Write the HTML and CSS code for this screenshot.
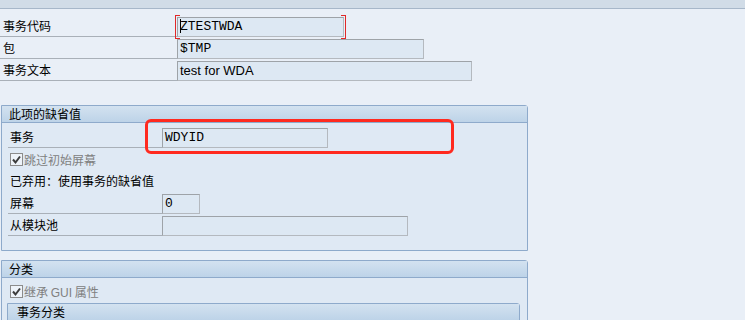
FILE: index.html
```html
<!DOCTYPE html>
<html lang="zh">
<head>
<meta charset="UTF-8">
<title>事务维护</title>
<link rel="stylesheet" href="styles.css">
</head>
<body>
<div class="toolbar"></div>
<div class="page">
    <div class="head-fields">
        <div class="row">
            <div class="label">事务代码</div>
            <div class="field focused w-167 mono"><span class="caret"></span>ZTESTWDA</div>
        </div>
        <div class="row">
            <div class="label">包</div>
            <div class="field w-247 mono">$TMP</div>
        </div>
        <div class="row">
            <div class="label">事务文本</div>
            <div class="field w-295 sans">test for WDA</div>
        </div>
    </div>

    <div class="group group-defaults">
        <div class="group-title">此项的缺省值</div>
        <div class="group-body">
            <div class="row">
                <div class="label">事务</div>
                <div class="field w-166 mono">WDYID</div>
            </div>
            <div class="check-row">
                <svg class="check" width="13" height="13" viewBox="0 0 13 13"><rect x="0.5" y="0.5" width="12" height="12" fill="#eef3f9" stroke="#8c8c8c"/><path d="M3 6.5 L5.5 9.5 L10 3.5" fill="none" stroke="#3c3c3c" stroke-width="2"/></svg>
                <span>跳过初始屏幕</span>
            </div>
            <div class="note">已弃用：使用事务的缺省值</div>
            <div class="row">
                <div class="label">屏幕</div>
                <div class="field w-38 mono">0</div>
            </div>
            <div class="row">
                <div class="label">从模块池</div>
                <div class="field w-246 mono"></div>
            </div>
        </div>
    </div>

    <div class="group group-class">
        <div class="group-title">分类</div>
        <div class="group-body">
            <div class="check-row">
                <svg class="check" width="13" height="13" viewBox="0 0 13 13"><rect x="0.5" y="0.5" width="12" height="12" fill="#eef3f9" stroke="#8c8c8c"/><path d="M3 6.5 L5.5 9.5 L10 3.5" fill="none" stroke="#3c3c3c" stroke-width="2"/></svg>
                <span>继承 <span class="latin">GUI</span> 属性</span>
            </div>
            <div class="group inner">
                <div class="group-title">事务分类</div>
            </div>
        </div>
    </div>

    <div class="highlight"></div>
</div>
</body>
</html>
```

FILE: styles.css
```css
body {
    margin: 0;
    background-color: #e9eff7;
    font-family: "Noto Sans CJK SC", "Liberation Sans", sans-serif;
    font-size: 12px;
    color: #000;
    overflow: hidden;
}
.toolbar {
    height: 8px;
    background-color: #d1dce7;
    border-bottom: 1px solid #a7b7c9;
}
.page {
    position: relative;
    padding-top: 6px;
}
.row {
    display: flex;
    align-items: flex-end;
    height: 22px;
}
.label {
    box-sizing: border-box;
    height: 22px;
    line-height: 21px;
    padding-left: 3px;
    border-bottom: 1px solid #a9b0b8;
    width: 177px;
    flex-shrink: 0;
}
.field {
    position: relative;
    box-sizing: border-box;
    height: 20px;
    line-height: 18px;
    padding-left: 2px;
    background-color: #dde8f3;
    border: 1px solid #b4b9bf;
    border-top-color: #9ea3a8;
    border-left-color: #9ea3a8;
    white-space: nowrap;
}
.mono {
    font-family: "Liberation Mono", monospace;
    font-size: 13px;
}
.sans {
    font-family: "Liberation Sans", sans-serif;
    font-size: 13px;
}
.w-167 { width: 167px; }
.w-247 { width: 247px; }
.w-295 { width: 295px; }
.w-166 { width: 166px; }
.w-38 { width: 38px; }
.w-246 { width: 246px; }

.caret {
    display: inline-block;
    width: 1px;
    height: 14px;
    margin-right: -1px;
    vertical-align: -3px;
    background-color: #000;
}
.focused::before,
.focused::after {
    content: '';
    position: absolute;
    top: -3px;
    bottom: -3px;
    width: 4px;
    border-top: 1px solid #e02828;
    border-bottom: 1px solid #e02828;
}
.focused::before {
    left: -3px;
    border-left: 1px solid #e02828;
}
.focused::after {
    right: -3px;
    border-right: 1px solid #e02828;
}

.group {
    box-sizing: border-box;
    width: 527px;
    margin-left: 1px;
    background-color: #dfe9f4;
    border: 1px solid #8eaacb;
    border-top-right-radius: 3px;
}
.group-defaults {
    margin-top: 24px;
    height: 146px;
}
.group-class {
    margin-top: 9px;
    height: 80px;
}
.group-title {
    height: 16px;
    line-height: 16px;
    padding-left: 7px;
    background: linear-gradient(#d3e2f0, #bdd3e8);
    border-bottom: 1px solid #8eaacb;
}
.group-body {
    padding: 3px 0 0 6px;
}
.group-body .label {
    width: 154px;
    padding-left: 2px;
}
.check-row {
    display: flex;
    align-items: center;
    height: 22px;
    padding-left: 2px;
    color: #808080;
}
.check {
    margin-right: 1px;
}
.latin {
    font-family: "Liberation Sans", sans-serif;
}
.note {
    height: 22px;
    line-height: 22px;
    padding-left: 2px;
}
.group-class .group-body {
    padding-left: 5px;
}
.group-class .check-row {
    height: 20px;
    padding-left: 3px;
}
.inner {
    width: 513px;
    margin-left: 0;
    margin-top: 2px;
    height: 30px;
}
.inner .group-title {
    padding-left: 9px;
    height: 16px;
    line-height: 15px;
}
.highlight {
    position: absolute;
    left: 145px;
    top: 110px;
    width: 303px;
    height: 29px;
    border: 3px solid #ff2a1f;
    border-radius: 6px;
}
```
